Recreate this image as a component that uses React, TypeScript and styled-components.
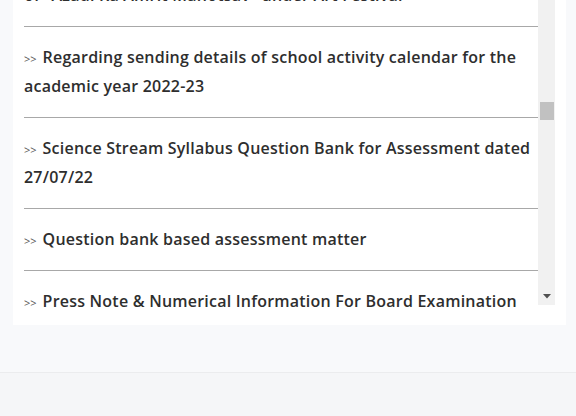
import React from "react";
import styled, { createGlobalStyle } from "styled-components";

const GlobalStyle = createGlobalStyle`
  html, body { margin: 0; padding: 0; background: #f5f6f8; overflow: hidden; }
  body { font-family: "Open Sans", Roboto, Arial, sans-serif; }
  * { box-sizing: border-box; }
`;

const Panel = styled.section`
  background: #f8f9fb;
  padding: 0 10px 47px 13px;
  border-bottom: 1px solid #ebecee;
  box-shadow: 0 4px 10px rgba(0, 0, 0, 0.07);
`;

const Card = styled.div`
  background: #ffffff;
  padding: 0 11px 20px 11px;
`;

const ScrollBox = styled.div`
  display: flex;
  align-items: flex-start;
  height: 305px;
`;

const Viewport = styled.div`
  flex: 1;
  height: 309px;
  overflow: hidden;
`;

const List = styled.ul<{ $offset: number }>`
  list-style: none;
  margin: 0;
  padding: 0;
  transform: translateY(${(p) => -p.$offset}px);
`;

const Item = styled.li`
  padding: 16px 0;
  border-bottom: 1px solid #a8a8a8;
  font-size: 16px;
  line-height: 29px;
  font-weight: 600;
  color: #2e2e2e;
  letter-spacing: 0.22px;
  white-space: pre-line;
`;

const Chevrons = styled.span`
  font-size: 11px;
  line-height: 1;
  font-weight: 400;
  color: #555555;
  margin-right: 6px;
  letter-spacing: 0;
`;

const Track = styled.div`
  width: 17px;
  height: 305px;
  background: #f1f1f1;
  display: flex;
  flex-direction: column;
  align-items: center;
`;

const Thumb = styled.div<{ $top: number; $size: number }>`
  margin-top: ${(p) => p.$top}px;
  width: 14px;
  height: ${(p) => p.$size}px;
  background: #c1c1c1;
`;

const Spacer = styled.div`
  flex: 1;
`;

const ArrowButton = styled.div`
  height: 17px;
  width: 17px;
  display: flex;
  align-items: center;
  justify-content: center;
  padding-bottom: 1px;
`;

const notices = [
  'Regarding organizing competitions in schools as a part\nof "Azadi Ka Amrit Mahotsav" under Art Festival',
  "Regarding sending details of school activity calendar for the academic year 2022-23",
  "Science Stream Syllabus Question Bank for Assessment dated 27/07/22",
  "Question bank based assessment matter",
  "Press Note & Numerical Information For Board Examination",
  "Regarding online training programme for teachers of secondary schools",
];

export default function App() {
  return (
    <>
      <GlobalStyle />
      <Panel>
        <Card>
          <ScrollBox>
            <Viewport>
              <List $offset={64}>
                {notices.map((n) => (
                  <Item key={n}>
                    <Chevrons>&gt;&gt;</Chevrons>
                    {n}
                  </Item>
                ))}
              </List>
            </Viewport>
            <Track>
              <Thumb $top={102} $size={18} />
              <Spacer />
              <ArrowButton>
                <svg width="8" height="5" viewBox="0 0 8 5">
                  <path d="M0 0 L8 0 L4 4.5 Z" fill="#505050" />
                </svg>
              </ArrowButton>
            </Track>
          </ScrollBox>
        </Card>
      </Panel>
    </>
  );
}
